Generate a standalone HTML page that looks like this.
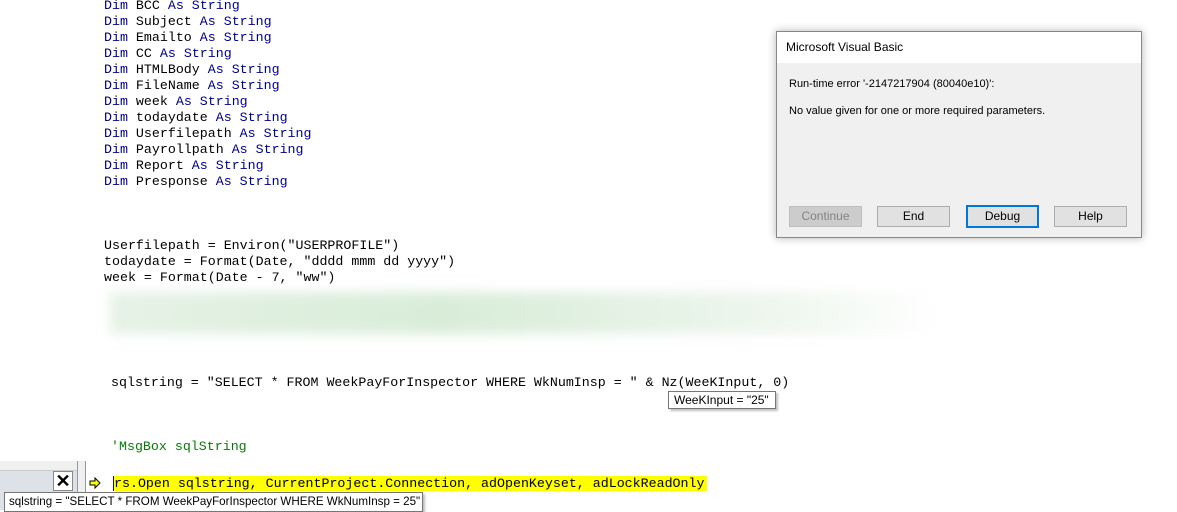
<!DOCTYPE html>
<html><head><style>
body{margin:0;width:1177px;height:510px;background:#fff;position:relative;overflow:hidden;font-family:"Liberation Sans",sans-serif}
.c{position:absolute;font-family:"Liberation Mono",monospace;font-size:13.3px;line-height:16px;white-space:pre;color:#000}
.k{color:#00008b}
.g{color:#008000}
.btn{position:absolute;top:206px;width:71px;height:19px;border:1px solid #adadad;background:#e1e1e1;font-size:12px;text-align:center;line-height:19px;color:#000}
</style></head><body>
<div class="c" style="left:104px;top:-2px"><span class="k">Dim</span> BCC <span class="k">As String</span>
<span class="k">Dim</span> Subject <span class="k">As String</span>
<span class="k">Dim</span> Emailto <span class="k">As String</span>
<span class="k">Dim</span> CC <span class="k">As String</span>
<span class="k">Dim</span> HTMLBody <span class="k">As String</span>
<span class="k">Dim</span> FileName <span class="k">As String</span>
<span class="k">Dim</span> week <span class="k">As String</span>
<span class="k">Dim</span> todaydate <span class="k">As String</span>
<span class="k">Dim</span> Userfilepath <span class="k">As String</span>
<span class="k">Dim</span> Payrollpath <span class="k">As String</span>
<span class="k">Dim</span> Report <span class="k">As String</span>
<span class="k">Dim</span> Presponse <span class="k">As String</span></div>
<div class="c" style="left:104px;top:238px">Userfilepath = Environ("USERPROFILE")
todaydate = Format(Date, "dddd mmm dd yyyy")
week = Format(Date - 7, "ww")</div>
<div style="position:absolute;left:110px;top:292px;width:830px;height:42px;background:linear-gradient(90deg,#e6f2e6,#d8ecd8 40%,#eef6ee 80%,#fff);filter:blur(6px)"></div>
<div class="c" style="left:111px;top:375px">sqlstring = "SELECT * FROM WeekPayForInspector WHERE WkNumInsp = " &amp; Nz(WeeKInput, 0)</div>
<div style="position:absolute;left:668px;top:391px;width:108px;height:18px;border:1px solid #767676;background:#fff;font-size:12px;line-height:16px;padding-left:5px;box-sizing:border-box;box-shadow:2px 2px 2px rgba(0,0,0,.25);white-space:nowrap">WeeKInput = "25"</div>
<div class="c g" style="left:111px;top:439px">'MsgBox sqlString</div>
<div style="position:absolute;left:0;top:461px;width:77px;height:49px;background:#dde1e8"></div>
<div style="position:absolute;left:0;top:461px;width:77px;height:9px;background:#f0f0f0;border-bottom:1px solid #ccc"></div>
<div style="position:absolute;left:53px;top:471px;width:18px;height:18px;border:1px solid #888;background:#fff;font-size:18px;line-height:18px;text-align:center;font-weight:bold">✕</div>
<div style="position:absolute;left:77px;top:461px;width:7px;height:49px;background:#f0f0f0;border-left:1px solid #999;border-right:1px solid #999"></div>
<svg style="position:absolute;left:89px;top:477px" width="12" height="12"><path d="M1 4H6V1L11 6L6 11V8H1Z" fill="#ff0" stroke="#000" stroke-width="1"/></svg>
<div style="position:absolute;left:113px;top:476px;width:594px;height:15px;background:#ff0"></div>
<div style="position:absolute;left:113px;top:476px;width:1px;height:15px;background:#00f"></div>
<div class="c" style="left:114px;top:476px">rs.Open sqlstring, CurrentProject.Connection, adOpenKeyset, adLockReadOnly</div>
<div style="position:absolute;left:4px;top:492px;width:419px;height:20px;border:1px solid #767676;background:#fff;font-size:11.6px;line-height:17px;padding-left:4px;box-sizing:border-box;box-shadow:2px 2px 2px rgba(0,0,0,.25);white-space:nowrap;overflow:hidden">sqlstring = "SELECT * FROM WeekPayForInspector WHERE WkNumInsp = 25"</div>
<div style="position:absolute;left:776px;top:31px;width:366px;height:207px;border:1px solid #888;background:#f0f0f0;box-sizing:border-box;box-shadow:0 0 8px rgba(0,0,0,.3)">
<div style="height:31px;background:#fff;font-size:12px;line-height:31px;padding-left:9px">Microsoft Visual Basic</div>
<div style="position:absolute;left:12px;top:46px;font-size:11px">Run-time error '-2147217904 (80040e10)':</div>
<div style="position:absolute;left:12px;top:73px;font-size:11px">No value given for one or more required parameters.</div>
</div>
<div class="btn" style="left:789px;color:#838383;background:#ccc;border-color:#bfbfbf">Continue</div>
<div class="btn" style="left:877px">End</div>
<div class="btn" style="left:966px;border:2px solid #0078d7;top:205px;height:19px;width:69px">Debug</div>
<div class="btn" style="left:1054px">Help</div>
</body></html>
